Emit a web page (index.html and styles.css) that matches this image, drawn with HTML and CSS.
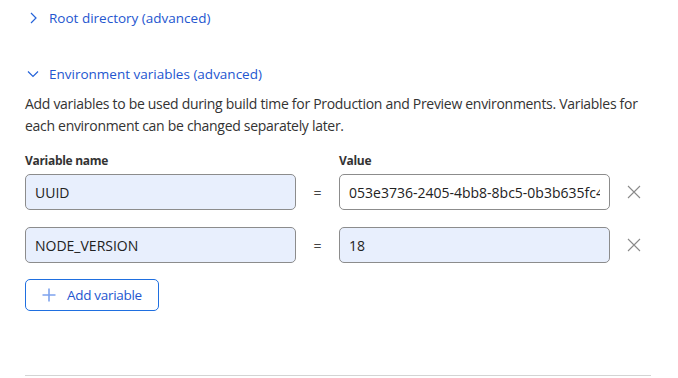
FILE: index.html
```html
<!DOCTYPE html>
<html lang="en">
<head>
  <meta charset="UTF-8" />
  <title>Build settings</title>
  <link rel="stylesheet" href="styles.css">
</head>
<body>
  <div class="settings">
    <button class="toggle">
      <svg class="chev" width="12" height="12" viewBox="0 0 12 12"><path d="M4 1 L9 6 L4 11" fill="none" stroke="#2563d9" stroke-width="1.2"/></svg>
      <span>Root directory (advanced)</span>
    </button>

    <button class="toggle open">
      <svg class="chev" width="12" height="12" viewBox="0 0 12 12"><path d="M1 3.5 L6 8.5 L11 3.5" fill="none" stroke="#2563d9" stroke-width="1.2"/></svg>
      <span>Environment variables (advanced)</span>
    </button>

    <p class="desc">Add variables to be used during build time for Production and Preview environments. Variables for each environment can be changed separately later.</p>

    <div class="vars">
      <div class="label">Variable name</div>
      <div></div>
      <div class="label">Value</div>
      <div></div>

      <input class="field filled" value="UUID">
      <div class="eq">=</div>
      <input class="field" value="053e3736-2405-4bb8-8bc5-0b3b635fc4fe">
      <button class="remove"><svg width="14" height="14" viewBox="0 0 14 14"><path d="M1 1 L13 13 M13 1 L1 13" stroke="#8a8a8a" stroke-width="1.1"/></svg></button>

      <input class="field filled" value="NODE_VERSION">
      <div class="eq">=</div>
      <input class="field filled" value="18">
      <button class="remove"><svg width="14" height="14" viewBox="0 0 14 14"><path d="M1 1 L13 13 M13 1 L1 13" stroke="#8a8a8a" stroke-width="1.1"/></svg></button>
    </div>

    <button class="add-btn">
      <svg width="14" height="14" viewBox="0 0 14 14"><path d="M7 0.5 V13.5 M0.5 7 H13.5" stroke="#7ea3ee" stroke-width="1.6"/></svg>
      <span>Add variable</span>
    </button>

    <hr class="divider">
  </div>
</body>
</html>
```

FILE: styles.css
```css
body {
  margin: 0;
  font-family: "Open Sans", "Noto Sans", sans-serif;
  color: #313131;
  background: white;
}

.settings {
  padding: 7px 25px 0 25px;
}

.toggle {
  display: flex;
  align-items: center;
  gap: 10px;
  background: none;
  border: none;
  padding: 0;
  font-family: inherit;
  font-size: 13.5px;
  color: #2456cf;
  cursor: pointer;
  height: 22px;
}

.toggle .chev {
  margin-left: 2px;
}

.toggle.open {
  margin-top: 34px;
}

.desc {
  max-width: 620px;
  margin: 8px 0 0 0;
  font-size: 14px;
  line-height: 22px;
  letter-spacing: -0.3px;
  color: #333;
}

.vars {
  display: grid;
  grid-template-columns: 271px 43px 271px 48px;
  row-gap: 17px;
  margin-top: 15px;
  align-items: center;
}

.label {
  font-size: 12px;
  font-weight: bold;
  color: #333;
  margin-bottom: -12px;
  letter-spacing: -0.3px;
}

.field {
  box-sizing: border-box;
  width: 100%;
  height: 36px;
  margin: 0;
  border: 1px solid #8c8c8c;
  border-radius: 5px;
  padding: 0 9px;
  font-family: inherit;
  font-size: 14px;
  color: #222;
  background: white;
  outline: none;
}

.field.filled {
  background: #e8effd;
}

.eq {
  text-align: center;
  font-size: 14px;
  color: #444;
}

.remove {
  background: none;
  border: none;
  padding: 0;
  display: flex;
  justify-content: center;
  cursor: pointer;
}

.add-btn {
  margin-top: 16px;
  display: flex;
  align-items: center;
  gap: 11px;
  height: 32px;
  padding: 0 16px 0 16px;
  border: 1px solid #1f6fe0;
  border-radius: 5px;
  background: white;
  color: #2456cf;
  font-family: inherit;
  font-size: 13.5px;
  letter-spacing: -0.3px;
  cursor: pointer;
}

.divider {
  margin: 64px 0 0 0;
  width: 626px;
  border: none;
  border-top: 1px solid #d4d4d4;
}
```
